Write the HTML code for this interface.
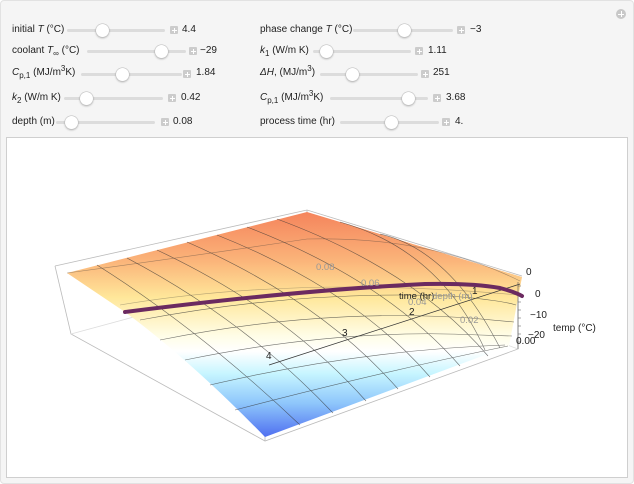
<!DOCTYPE html>
<html><head><meta charset="utf-8"><style>
body{margin:0;width:634px;height:484px;background:#fff;font-family:"Liberation Sans",sans-serif;overflow:hidden}
.panel{position:absolute;left:0;top:0;width:632px;height:482px;background:#f5f5f5;border:1px solid #e2e2e2;border-radius:4px}
.lbl{position:absolute;font-size:10px;color:#222;white-space:nowrap;line-height:12px}
.trk{position:absolute;height:3px;background:#dcdcdc;border-radius:2px}
.th{position:absolute;width:13px;height:13px;border-radius:50%;background:#fff;box-shadow:0 0 0 0.5px #bbb,0 1px 2px rgba(0,0,0,.3)}
.pl{position:absolute;width:8px;height:8px;background:#ccc;border-radius:1px}
.pl:before{content:"";position:absolute;left:3.5px;top:1.5px;width:1px;height:5px;background:#fff}
.pl:after{content:"";position:absolute;left:1.5px;top:3.5px;width:5px;height:1px;background:#fff}
.frame{position:absolute;left:6px;top:137px;width:620px;height:339px;background:#fff;border:1px solid #cfcfcf}
i{font-style:italic}
sub,sup{font-size:8px;line-height:0;vertical-align:baseline;position:relative}
sub{top:3px}
sup{top:-4px}
</style></head><body>
<div class="panel"></div>
<div style="position:absolute;left:616px;top:9px;width:10px;height:10px;border-radius:50%;background:#c8c8c8"></div>
<div style="position:absolute;left:618px;top:13.5px;width:6px;height:1px;background:#fff"></div>
<div style="position:absolute;left:620.5px;top:11px;width:1px;height:6px;background:#fff"></div>

<!-- left column -->
<div class="lbl" style="left:12px;top:24px">initial <i>T</i> (°C)</div>
<div class="trk" style="left:67px;top:29px;width:98px"></div><div class="th" style="left:96px;top:24px"></div>
<div class="pl" style="left:170px;top:26px"></div><div class="lbl" style="left:182px;top:24px">4.4</div>

<div class="lbl" style="left:12px;top:45px">coolant <i>T</i><sub>∞</sub> (°C)</div>
<div class="trk" style="left:87px;top:50px;width:99px"></div><div class="th" style="left:155px;top:45px"></div>
<div class="pl" style="left:189px;top:47px"></div><div class="lbl" style="left:200px;top:45px">−29</div>

<div class="lbl" style="left:12px;top:67px"><i>C</i><sub>p,1</sub> (MJ/m<sup>3</sup>K)</div>
<div class="trk" style="left:81px;top:73px;width:101px"></div><div class="th" style="left:116px;top:68px"></div>
<div class="pl" style="left:183px;top:70px"></div><div class="lbl" style="left:196px;top:67px">1.84</div>

<div class="lbl" style="left:12px;top:92px"><i>k</i><sub>2</sub> (W/m K)</div>
<div class="trk" style="left:64px;top:97px;width:99px"></div><div class="th" style="left:80px;top:92px"></div>
<div class="pl" style="left:168px;top:94px"></div><div class="lbl" style="left:181px;top:92px">0.42</div>

<div class="lbl" style="left:12px;top:116px">depth (m)</div>
<div class="trk" style="left:56px;top:121px;width:99px"></div><div class="th" style="left:65px;top:116px"></div>
<div class="pl" style="left:161px;top:118px"></div><div class="lbl" style="left:173px;top:116px">0.08</div>

<!-- right column -->
<div class="lbl" style="left:260px;top:24px">phase change <i>T</i> (°C)</div>
<div class="trk" style="left:353px;top:29px;width:100px"></div><div class="th" style="left:398px;top:24px"></div>
<div class="pl" style="left:457px;top:26px"></div><div class="lbl" style="left:470px;top:24px">−3</div>

<div class="lbl" style="left:260px;top:45px"><i>k</i><sub>1</sub> (W/m K)</div>
<div class="trk" style="left:313px;top:50px;width:98px"></div><div class="th" style="left:320px;top:45px"></div>
<div class="pl" style="left:415px;top:47px"></div><div class="lbl" style="left:428px;top:45px">1.11</div>

<div class="lbl" style="left:260px;top:67px"><i>ΔH</i>, (MJ/m<sup>3</sup>)</div>
<div class="trk" style="left:320px;top:73px;width:98px"></div><div class="th" style="left:346px;top:68px"></div>
<div class="pl" style="left:421px;top:70px"></div><div class="lbl" style="left:433px;top:67px">251</div>

<div class="lbl" style="left:260px;top:92px"><i>C</i><sub>p,1</sub> (MJ/m<sup>3</sup>K)</div>
<div class="trk" style="left:330px;top:97px;width:98px"></div><div class="th" style="left:402px;top:92px"></div>
<div class="pl" style="left:433px;top:94px"></div><div class="lbl" style="left:446px;top:92px">3.68</div>

<div class="lbl" style="left:260px;top:116px">process time (hr)</div>
<div class="trk" style="left:340px;top:121px;width:99px"></div><div class="th" style="left:385px;top:116px"></div>
<div class="pl" style="left:442px;top:118px"></div><div class="lbl" style="left:455px;top:116px">4.</div>

<div class="frame"></div>
<svg style="position:absolute;left:0;top:0" width="634" height="484" font-family="Liberation Sans, sans-serif">
<defs>
<linearGradient id="g" x1="0" y1="212" x2="0" y2="437" gradientUnits="userSpaceOnUse">
<stop offset="0" stop-color="#f5845c"/>
<stop offset="0.22" stop-color="#fbb57a"/>
<stop offset="0.38" stop-color="#ffe79a"/>
<stop offset="0.55" stop-color="#fffde6"/>
<stop offset="0.62" stop-color="#ffffff"/>
<stop offset="0.72" stop-color="#c6f5ff"/>
<stop offset="0.85" stop-color="#8ec6fb"/>
<stop offset="1" stop-color="#4f6ff0"/>
</linearGradient>
</defs>
<g stroke="#bbb" stroke-width="0.8" fill="none">
<path d="M55,266 L307,210 L522,276"/>
<path d="M55,266 L71,334 L265,441 L518,349 L518,282"/>
<path d="M307,210 L307,270"/>
<path d="M71,334 L307,270 L518,349" stroke="#ddd"/>
<path d="M265,365 L265,441"/>
</g>
<path d="M67,273 L307,212 L522,277 L509,346 L265,437 Q190,360 125,312 Z" fill="url(#g)"/>
<g stroke="#333" stroke-width="0.6" fill="none" opacity="0.7">
<path d="M97,265 Q200,330 300,425"/>
<path d="M127,258 Q245,320 333,413"/>
<path d="M157,250 Q285,310 366,401"/>
<path d="M187,242 Q320,300 398,389"/>
<path d="M217,235 Q355,290 430,377"/>
<path d="M247,227 Q385,280 460,366"/>
<path d="M277,219 Q415,270 488,356"/>
<path d="M340,222 Q440,250 485,350"/>
<path d="M380,234 Q450,250 500,348"/>
<path d="M67,273 Q200,255 307,239 Q430,236 520,281" opacity="0.6"/>
<path d="M140,320 Q300,290 450,296 Q500,300 516,305"/>
<path d="M160,340 Q320,308 470,318 L514,322"/>
<path d="M185,360 Q340,328 480,335 L512,336"/>
<path d="M210,385 Q360,350 505,345"/>
<path d="M235,410 Q380,372 508,346"/>
<path d="M120,305 Q300,275 518,295" opacity="0.5"/>
</g>
<path d="M269,365 L520,284" stroke="#333" stroke-width="0.7"/>
<path d="M518,282 L518,349" stroke="#555" stroke-width="0.6"/>
<g stroke="#555" stroke-width="0.5"><path d="M518,286h3M518,294h3M518,302h3M518,310h3M518,318h3M518,326h3M518,334h3M518,342h3"/></g>
<path d="M125,312 Q300,290 425,284 Q473,283 500,288 Q515,292 522,296" stroke="#6b2a60" stroke-width="4" fill="none" stroke-linecap="round"/>
<g font-size="10" fill="#222">
<text x="266" y="359">4</text><text x="342" y="336">3</text><text x="409" y="315">2</text><text x="472" y="294">1</text>
<text x="399" y="299" font-size="9.5">time (hr)</text>
<text x="526" y="275">0</text><text x="535" y="297">0</text><text x="530" y="318">−10</text>
<text x="553" y="331">temp (°C)</text><text x="528" y="338">−20</text><text x="516" y="344">0.00</text>
</g>
<g font-size="9.5" fill="#999">
<text x="432" y="299">depth (m)</text>
<text x="316" y="270">0.08</text><text x="361" y="286">0.06</text><text x="408" y="305">0.04</text><text x="460" y="323">0.02</text>
</g>
</svg>
</body></html>
